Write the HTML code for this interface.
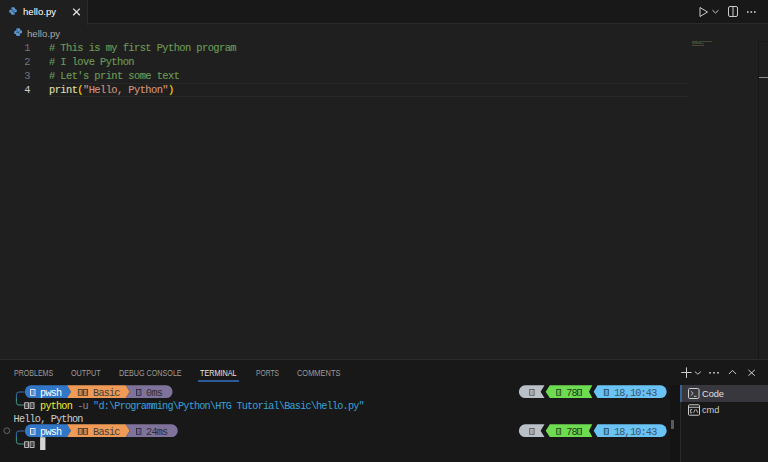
<!DOCTYPE html>
<html><head><meta charset="utf-8">
<style>
*{margin:0;padding:0;box-sizing:border-box}
html,body{width:768px;height:462px;overflow:hidden;background:#1f1f1f;font-family:"Liberation Sans",sans-serif}
.a{position:absolute}
.mono{font-family:"Liberation Mono",monospace;white-space:pre;-webkit-text-stroke:0.15px currentColor}
.ln,.t{-webkit-text-stroke:0}
#tabbar{left:0;top:0;width:768px;height:24px;background:#181818;border-bottom:1px solid #2b2b2b}
#tab{left:0;top:0;width:88px;height:25px;background:#1f1f1f;border-right:1px solid #2b2b2b}
.code{font-size:10.4px;letter-spacing:-0.57px;line-height:14px;height:14px}
.ln{font-size:10.4px;line-height:14px;height:14px;width:30.5px;text-align:right;color:#6e7681}
#panel{left:0;top:359px;width:768px;height:103px;background:#181818;border-top:1px solid #2b2b2b}
.ptab{transform-origin:0 0;top:367px;font-size:8.5px;line-height:12px;color:#9d9d9d;white-space:pre}
.t{font-size:10.2px;letter-spacing:-0.805px;line-height:13px;height:13px}
.seg{height:13px}
</style></head><body>
<!-- tab bar -->
<div id="tabbar" class="a"></div>
<div id="tab" class="a"></div>
<svg class="a" style="left:9.2px;top:7px" width="8" height="8" viewBox="0 0 16 16"><path fill="#5a9ad2" d="M7.6 0.5c-2.9 0-3.4 1.3-3.4 2.5v1.7h3.6v0.7H2.8C1.4 5.4 0.3 6.5 0.3 8.5c0 2.1 1.1 3.1 2.5 3.1h1.4V9.7c0-1.3 1.1-2.4 2.4-2.4h3.6c1.1 0 1.9-0.9 1.9-1.9V3c0-1.3-1.1-2.2-2.4-2.4C9.1 0.5 8.3 0.5 7.6 0.5zM5.9 1.8c0.4 0 0.7 0.3 0.7 0.7S6.3 3.2 5.9 3.2 5.2 2.9 5.2 2.5 5.5 1.8 5.9 1.8z"/><path fill="#5a9ad2" d="M8.4 15.5c2.9 0 3.4-1.3 3.4-2.5v-1.7H8.2v-0.7h5c1.4 0 2.5-1.1 2.5-3.1 0-2.1-1.1-3.1-2.5-3.1h-1.4v1.9c0 1.3-1.1 2.4-2.4 2.4H5.8c-1.1 0-1.9 0.9-1.9 1.9V13c0 1.3 1.1 2.200 2.4 2.4 0.8 0.1 1.6 0.1 2.1 0.1zM10.1 14.2c-0.4 0-0.7-0.3-0.7-0.7s0.3-0.7 0.7-0.7 0.7 0.3 0.7 0.7-0.3 0.7-0.7 0.7z"/></svg>
<div class="a" style="left:23px;top:5px;font-size:9.6px;line-height:14px;color:#ffffff">hello.py</div>
<svg class="a" style="left:72px;top:7px" width="9" height="9" viewBox="0 0 9 9"><path d="M1.2 1.6L7.8 8.2M7.8 1.6L1.2 8.2" stroke="#e6e6e6" stroke-width="1.25"/></svg>
<!-- top right actions -->
<svg class="a" style="left:698px;top:6px" width="60" height="12" viewBox="0 0 60 12">
<path d="M2 1.5L9.5 6L2 10.5Z" fill="none" stroke="#cccccc" stroke-width="1" stroke-linejoin="round"/>
<path d="M14.5 4.2L17.5 7L20.5 4.2" fill="none" stroke="#cccccc" stroke-width="1"/>
<rect x="30.5" y="0.5" width="9" height="10" rx="1.5" fill="none" stroke="#cccccc" stroke-width="1"/>
<path d="M35 0.5V10.5" stroke="#cccccc" stroke-width="1"/>
<rect x="49" y="5.2" width="1.6" height="1.6" fill="#cccccc"/><rect x="52.5" y="5.2" width="1.6" height="1.6" fill="#cccccc"/><rect x="56" y="5.2" width="1.6" height="1.6" fill="#cccccc"/>
</svg>
<!-- breadcrumbs -->
<svg class="a" style="left:13.8px;top:28.3px" width="8.3" height="8.3" viewBox="0 0 16 16"><path fill="#5a9ad2" d="M7.6 0.5c-2.9 0-3.4 1.3-3.4 2.5v1.7h3.6v0.7H2.8C1.4 5.4 0.3 6.5 0.3 8.5c0 2.1 1.1 3.1 2.5 3.1h1.4V9.7c0-1.3 1.1-2.4 2.4-2.4h3.6c1.1 0 1.9-0.9 1.9-1.9V3c0-1.3-1.1-2.2-2.4-2.4C9.1 0.5 8.3 0.5 7.6 0.5zM5.9 1.8c0.4 0 0.7 0.3 0.7 0.7S6.3 3.2 5.9 3.2 5.2 2.9 5.2 2.5 5.5 1.8 5.9 1.8z"/><path fill="#5a9ad2" d="M8.4 15.5c2.9 0 3.4-1.3 3.4-2.5v-1.7H8.2v-0.7h5c1.4 0 2.5-1.1 2.5-3.1 0-2.1-1.1-3.1-2.5-3.1h-1.4v1.9c0 1.300-1.1 2.4-2.4 2.4H5.8c-1.1 0-1.9 0.9-1.9 1.9V13c0 1.3 1.1 2.2 2.4 2.4 0.8 0.1 1.6 0.1 2.1 0.1zM10.1 14.2c-0.4 0-0.7-0.3-0.7-0.7s0.3-0.7 0.7-0.7 0.7 0.3 0.7 0.7-0.3 0.7-0.7 0.7z"/></svg>
<div class="a" style="left:27px;top:26.7px;font-size:9.6px;line-height:14px;color:#a9a9a9">hello.py</div>
<!-- current line highlight -->
<div class="a" style="left:49px;top:83px;width:639px;height:14px;border-top:1px solid #282828;border-bottom:1px solid #282828"></div>
<!-- line numbers -->
<div class="a mono ln" style="left:0;top:41px">1</div>
<div class="a mono ln" style="left:0;top:55px">2</div>
<div class="a mono ln" style="left:0;top:69px">3</div>
<div class="a mono ln" style="left:0;top:83px;color:#cccccc">4</div>
<!-- code -->
<div class="a mono code" style="left:49px;top:41px;color:#6a9955"># This is my first Python program</div>
<div class="a mono code" style="left:49px;top:55px;color:#6a9955"># I love Python</div>
<div class="a mono code" style="left:49px;top:69px;color:#6a9955"># Let's print some text</div>
<div class="a mono code" style="left:49px;top:83px"><span style="color:#dcdcaa">print</span><span style="color:#ffd700">(</span><span style="color:#ce9178">"Hello, Python"</span><span style="color:#ffd700">)</span></div>
<!-- minimap -->
<div class="a" style="left:692px;top:40.5px;width:6px;height:1px;background:#3a4a34"></div>
<div class="a" style="left:699px;top:40.5px;width:13px;height:1px;background:#3a4a34"></div>
<div class="a" style="left:692px;top:42px;width:9px;height:1px;background:#34422f"></div>
<div class="a" style="left:692px;top:43px;width:12px;height:1px;background:#34422f"></div>
<div class="a" style="left:692px;top:44.5px;width:5px;height:1px;background:#4a4a3a"></div>
<div class="a" style="left:697px;top:44.5px;width:7px;height:1px;background:#4e4238"></div>
<!-- overview ruler -->
<div class="a" style="left:758px;top:41px;width:10px;height:318px;border-left:1px solid #171717;border-top:1px solid #1a1a1a"></div>
<div class="a" style="left:759px;top:76.5px;width:9px;height:1.5px;background:#8c8c8c"></div>

<!-- panel -->
<div id="panel" class="a"></div>
<div class="a ptab" style="left:14px;transform:scaleX(0.83)">PROBLEMS</div>
<div class="a ptab" style="left:71px;transform:scaleX(0.85)">OUTPUT</div>
<div class="a ptab" style="left:119.4px;transform:scaleX(0.845)">DEBUG CONSOLE</div>
<div class="a ptab" style="left:200.2px;color:#e7e7e7;transform:scaleX(0.85)">TERMINAL</div>
<div class="a" style="left:198px;top:380px;width:41px;height:2px;background:#2a5a98"></div>
<div class="a ptab" style="left:256px;transform:scaleX(0.79)">PORTS</div>
<div class="a ptab" style="left:297px;transform:scaleX(0.875)">COMMENTS</div>
<!-- panel actions -->
<svg class="a" style="left:680px;top:366px" width="80" height="14" viewBox="0 0 80 14">
<path d="M6.5 1.4V11.9M1.2 6.5H11.6" stroke="#cccccc" stroke-width="1"/>
<path d="M14.9 5.6L17.9 8.2L20.9 5.6" fill="none" stroke="#cccccc" stroke-width="0.95"/>
<rect x="29.2" y="6" width="1.6" height="1.6" fill="#cccccc"/><rect x="33.2" y="6" width="1.6" height="1.6" fill="#cccccc"/><rect x="37.2" y="6" width="1.6" height="1.6" fill="#cccccc"/>
<path d="M48.9 8L52.5 4.4L56.1 8" fill="none" stroke="#cccccc" stroke-width="1"/>
<path d="M68.4 3.9L74.8 9.7M74.8 3.9L68.4 9.7" stroke="#cccccc" stroke-width="1"/>
</svg>
<!-- terminal scroll + tabs -->
<div class="a" style="left:670px;top:385px;width:10px;height:77px;background:#141414"></div>
<div class="a" style="left:671px;top:420px;width:3px;height:9px;background:#5a5a5a"></div>
<div class="a" style="left:680px;top:385px;width:1px;height:77px;background:#2b2b2b"></div>
<div class="a" style="left:681px;top:385px;width:87px;height:17px;background:#37373d"></div>
<div class="a" style="left:680px;top:385px;width:2px;height:17px;background:#3b6290"></div>
<svg class="a" style="left:688px;top:388px" width="12" height="12" viewBox="0 0 12 12"><rect x="0.5" y="0.5" width="10.5" height="10" rx="1.2" fill="none" stroke="#cccccc"/><path d="M2.8 3.2L5.2 5.4L2.8 7.6" fill="none" stroke="#cccccc" stroke-width="0.9"/><path d="M5.8 8.3H8.6" stroke="#cccccc" stroke-width="0.9"/></svg>
<div class="a" style="left:702px;top:387.8px;font-size:9.2px;line-height:12px;color:#e0e0e0">Code</div>
<svg class="a" style="left:688px;top:404px" width="12" height="12" viewBox="0 0 12 12"><rect x="0.5" y="0.8" width="11" height="10.4" rx="0.8" fill="none" stroke="#cccccc"/><path d="M0.5 3.3H11.5" stroke="#cccccc" stroke-width="0.9"/><path d="M4.2 5.6H2.6V8.8H4.2" fill="none" stroke="#cccccc" stroke-width="0.9"/><path d="M5.6 8.8L7.2 5.4M8.2 5.4L9.8 8.8" fill="none" stroke="#cccccc" stroke-width="0.9"/></svg>
<div class="a" style="left:702px;top:404px;font-size:9.2px;line-height:12px;color:#cccccc">cmd</div>
<!-- terminal -->
<svg class="a" style="left:0;top:0" width="768" height="462" viewBox="0 0 768 462"><path d="M31.1 385.3H67L71 391.65L67 398H31.1A6.35 6.35 0 0 1 31.1 385.3Z" fill="#3277c7"/><path d="M67 385.3H125.8L129.7 391.65L125.8 398H67L71 391.65Z" fill="#f09a58"/><path d="M125.8 385.3H166.25A6.35 6.35 0 0 1 166.25 398H125.8L129.7 391.65Z" fill="#80739b"/><path d="M525.2 385.3H544.5L540.6 391.65L544.5 398H525.2A6.35 6.35 0 0 1 525.2 385.3Z" fill="#b9c0c8"/><path d="M545.7 391.65L549.8 385.3H592.3L589 391.65L592.3 398H549.8Z" fill="#6edc50"/><path d="M593.7 391.65L597.5 385.3H660.35A6.35 6.35 0 0 1 660.35 398H597.5Z" fill="#69c3f5"/><rect x="30.50" y="389.50" width="4.50" height="5.80" fill="none" stroke="#f0f0f0" stroke-width="0.9"/><path d="M31.98 390.60V394.20M33.63 390.60V394.20" fill="none" stroke="#9ab8e0" stroke-width="0.7"/><rect x="78.30" y="389.50" width="4.00" height="5.80" fill="none" stroke="#4a3a2a" stroke-width="0.9"/><path d="M79.60 390.60V394.20M81.10 390.60V394.20" fill="none" stroke="#7a5a3a" stroke-width="0.7"/><rect x="83.60" y="389.50" width="4.00" height="5.80" fill="none" stroke="#4a3a2a" stroke-width="0.9"/><path d="M84.90 390.60V394.20M86.40 390.60V394.20" fill="none" stroke="#7a5a3a" stroke-width="0.7"/><rect x="136.50" y="389.50" width="4.40" height="5.80" fill="none" stroke="#2e2840" stroke-width="0.9"/><path d="M137.94 390.60V394.20M139.56 390.60V394.20" fill="none" stroke="#5a5070" stroke-width="0.7"/><rect x="529.70" y="389.50" width="4.40" height="5.80" fill="none" stroke="#5a5a5a" stroke-width="0.9"/><path d="M531.14 390.60V394.20M532.76 390.60V394.20" fill="none" stroke="#9a8a7a" stroke-width="0.7"/><rect x="556.70" y="389.50" width="4.00" height="5.80" fill="none" stroke="#2a4a20" stroke-width="0.9"/><path d="M558.00 390.60V394.20M559.50 390.60V394.20" fill="none" stroke="#4a8a3a" stroke-width="0.7"/><rect x="577.60" y="389.50" width="4.00" height="5.80" fill="none" stroke="#2a4a20" stroke-width="0.9"/><path d="M578.90 390.60V394.20M580.40 390.60V394.20" fill="none" stroke="#4a8a3a" stroke-width="0.7"/><rect x="604.30" y="389.50" width="4.00" height="5.80" fill="none" stroke="#2a4a6a" stroke-width="0.9"/><path d="M605.60 390.60V394.20M607.10 390.60V394.20" fill="none" stroke="#4a7aa0" stroke-width="0.7"/><path d="M24.5 392.0H18.9A2.5 2.5 0 0 0 16.4 394.5V398" fill="none" stroke="#3a6fae" stroke-width="1"/><path d="M16.4 398V402.5A2.5 2.5 0 0 0 18.9 405.0H24.2" fill="none" stroke="#3f978b" stroke-width="1"/><rect x="24.70" y="402.80" width="3.70" height="5.60" fill="none" stroke="#d8d8d8" stroke-width="0.9"/><path d="M25.89 403.90V407.30M27.30 403.90V407.30" fill="none" stroke="#8a7a8a" stroke-width="0.7"/><rect x="30.10" y="402.80" width="3.90" height="5.60" fill="none" stroke="#d8d8d8" stroke-width="0.9"/><path d="M31.36 403.90V407.30M32.83 403.90V407.30" fill="none" stroke="#8a7a8a" stroke-width="0.7"/><path d="M31.1 424.3H67L71 430.65L67 437H31.1A6.35 6.35 0 0 1 31.1 424.3Z" fill="#3277c7"/><path d="M67 424.3H125.8L129.7 430.65L125.8 437H67L71 430.65Z" fill="#f09a58"/><path d="M125.8 424.3H171.45000000000002A6.35 6.35 0 0 1 171.45000000000002 437H125.8L129.7 430.65Z" fill="#80739b"/><path d="M525.2 424.3H544.5L540.6 430.65L544.5 437H525.2A6.35 6.35 0 0 1 525.2 424.3Z" fill="#b9c0c8"/><path d="M545.7 430.65L549.8 424.3H592.3L589 430.65L592.3 437H549.8Z" fill="#6edc50"/><path d="M593.7 430.65L597.5 424.3H660.35A6.35 6.35 0 0 1 660.35 437H597.5Z" fill="#69c3f5"/><rect x="30.50" y="428.50" width="4.50" height="5.80" fill="none" stroke="#f0f0f0" stroke-width="0.9"/><path d="M31.98 429.60V433.20M33.63 429.60V433.20" fill="none" stroke="#9ab8e0" stroke-width="0.7"/><rect x="78.30" y="428.50" width="4.00" height="5.80" fill="none" stroke="#4a3a2a" stroke-width="0.9"/><path d="M79.60 429.60V433.20M81.10 429.60V433.20" fill="none" stroke="#7a5a3a" stroke-width="0.7"/><rect x="83.60" y="428.50" width="4.00" height="5.80" fill="none" stroke="#4a3a2a" stroke-width="0.9"/><path d="M84.90 429.60V433.20M86.40 429.60V433.20" fill="none" stroke="#7a5a3a" stroke-width="0.7"/><rect x="136.50" y="428.50" width="4.40" height="5.80" fill="none" stroke="#2e2840" stroke-width="0.9"/><path d="M137.94 429.60V433.20M139.56 429.60V433.20" fill="none" stroke="#5a5070" stroke-width="0.7"/><rect x="529.70" y="428.50" width="4.40" height="5.80" fill="none" stroke="#5a5a5a" stroke-width="0.9"/><path d="M531.14 429.60V433.20M532.76 429.60V433.20" fill="none" stroke="#9a8a7a" stroke-width="0.7"/><rect x="556.70" y="428.50" width="4.00" height="5.80" fill="none" stroke="#2a4a20" stroke-width="0.9"/><path d="M558.00 429.60V433.20M559.50 429.60V433.20" fill="none" stroke="#4a8a3a" stroke-width="0.7"/><rect x="577.60" y="428.50" width="4.00" height="5.80" fill="none" stroke="#2a4a20" stroke-width="0.9"/><path d="M578.90 429.60V433.20M580.40 429.60V433.20" fill="none" stroke="#4a8a3a" stroke-width="0.7"/><rect x="604.30" y="428.50" width="4.00" height="5.80" fill="none" stroke="#2a4a6a" stroke-width="0.9"/><path d="M605.60 429.60V433.20M607.10 429.60V433.20" fill="none" stroke="#4a7aa0" stroke-width="0.7"/><path d="M24.5 431.0H18.9A2.5 2.5 0 0 0 16.4 433.5V437" fill="none" stroke="#3a6fae" stroke-width="1"/><path d="M16.4 437V441.5A2.5 2.5 0 0 0 18.9 444.0H24.2" fill="none" stroke="#3f978b" stroke-width="1"/><rect x="24.70" y="441.80" width="3.70" height="5.60" fill="none" stroke="#d8d8d8" stroke-width="0.9"/><path d="M25.89 442.90V446.30M27.30 442.90V446.30" fill="none" stroke="#8a7a8a" stroke-width="0.7"/><rect x="30.10" y="441.80" width="3.90" height="5.60" fill="none" stroke="#d8d8d8" stroke-width="0.9"/><path d="M31.36 442.90V446.30M32.83 442.90V446.30" fill="none" stroke="#8a7a8a" stroke-width="0.7"/><circle cx="6.8" cy="430.7" r="2.9" fill="none" stroke="#6e6e6e" stroke-width="0.9"/><rect x="40.1" y="437.2" width="5.3" height="12.8" fill="#d4d4d4"/></svg>
<div class="a mono t" style="left:40.1px;top:387px;color:#ffffff">pwsh</div>
<div class="a mono t" style="left:93.1px;top:387px;color:#3d3d3d">Basic</div>
<div class="a mono t" style="left:146.1px;top:387px;color:#2d2d35">0ms</div>
<div class="a mono t" style="left:566.2px;top:387px;color:#1f3a18">78</div>
<div class="a mono t" style="left:614.0px;top:387px;color:#3e5468">18,10:43</div>
<div class="a mono t" style="left:40.1px;top:426px;color:#ffffff">pwsh</div>
<div class="a mono t" style="left:93.1px;top:426px;color:#3d3d3d">Basic</div>
<div class="a mono t" style="left:146.1px;top:426px;color:#2d2d35">24ms</div>
<div class="a mono t" style="left:566.2px;top:426px;color:#1f3a18">78</div>
<div class="a mono t" style="left:614.0px;top:426px;color:#3e5468">18,10:43</div>
<div class="a mono t" style="left:40.1px;top:400px;color:#ece83a">python</div>
<div class="a mono t" style="left:77.2px;top:400px;color:#8a8a8a">-u</div>
<div class="a mono t" style="left:93.1px;top:400px;color:#3aa0d6">"d:\Programming\Python\HTG Tutorial\Basic\hello.py"</div>
<div class="a mono t" style="left:13.6px;top:413px;color:#cccccc">Hello, Python</div>
<!-- /terminal -->
</body></html>
